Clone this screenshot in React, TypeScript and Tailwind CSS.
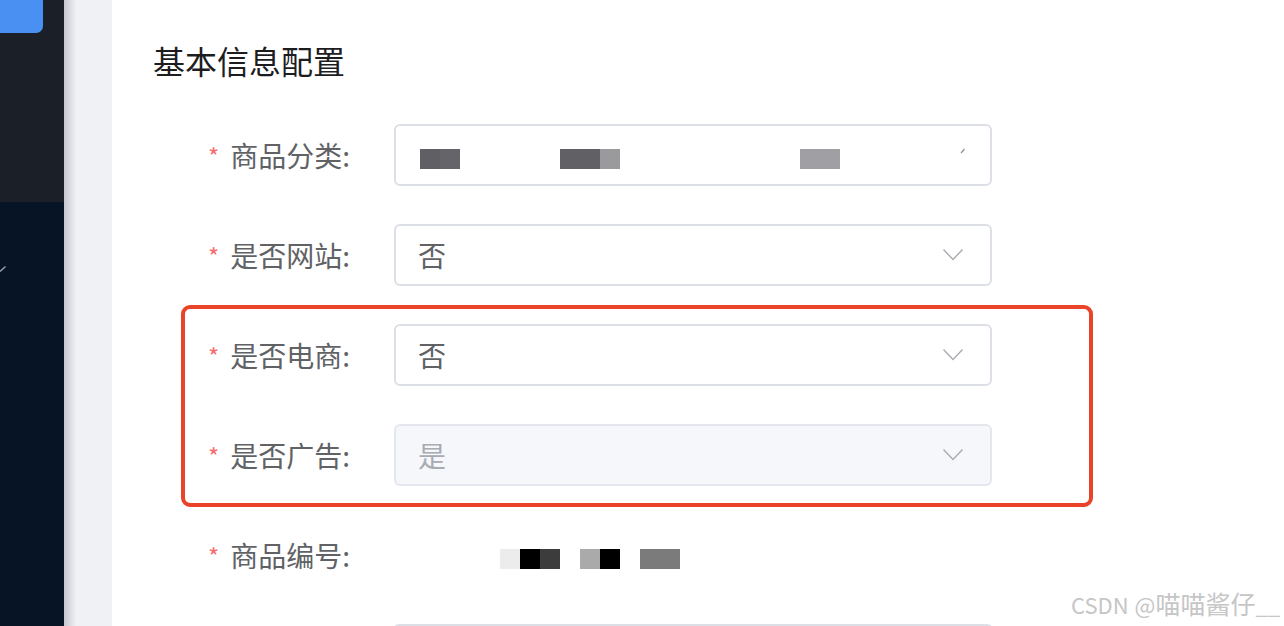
import React from 'react'

const font = { fontFamily: '"Noto Sans CJK SC", "Noto Sans", sans-serif' }

function Chevron() {
  return (
    <svg width="22" height="14" viewBox="0 0 22 14" fill="none" className="shrink-0">
      <path d="M1.5 1.5 L11 11.5 L20.5 1.5" stroke="#a8abb2" strokeWidth="1.4" />
    </svg>
  )
}

function Label({ text }: { text: string }) {
  return (
    <div className="w-[241px] shrink-0 flex justify-end items-center pr-[44px] text-[28px] leading-none text-[#606266]">
      <span className="text-[#f56c6c] text-[24px] mr-[11px] mt-[2px]">*</span>
      <span>{text}</span>
    </div>
  )
}

function SelectBox({ value, disabled }: { value: string; disabled?: boolean }) {
  return (
    <div
      className={
        disabled
          ? 'w-[598px] h-[62px] rounded-[6px] border-2 border-[#e4e7ed] bg-[#f5f7fa] flex items-center justify-between pl-[22px] pr-[26px]'
          : 'w-[598px] h-[62px] rounded-[6px] border-2 border-[#dcdfe6] bg-white flex items-center justify-between pl-[22px] pr-[26px]'
      }
    >
      <span className={disabled ? 'text-[28px] text-[#a8abb2]' : 'text-[28px] text-[#606266]'}>{value}</span>
      <Chevron />
    </div>
  )
}

export default function App() {
  return (
    <div className="h-[626px] w-[1284px] overflow-hidden flex bg-white relative" style={font}>
      {/* sidebar */}
      <aside className="w-[64px] shrink-0 flex flex-col">
        <div className="h-[202px] bg-[#1b1f27]">
          <div className="w-[43px] h-[33px] bg-[#4a90f2] rounded-br-[7px]" />
        </div>
        <div className="flex-1 bg-[#071426] pt-[62px]">
          <svg width="8" height="10" viewBox="0 0 8 10">
            <path d="M0 7.5 L5.5 2.5" stroke="#9ca3af" strokeWidth="1.3" />
          </svg>
        </div>
      </aside>

      {/* gray gutter */}
      <div className="w-[48px] shrink-0 bg-[#f0f1f4] flex">
        <div className="w-[12px] bg-linear-to-r from-[#c4c7ce] to-[#f0f1f4]" />
      </div>

      {/* content */}
      <main className="flex-1 pl-[41px] pt-[36px]">
        <h1 className="text-[32px] leading-[48px] text-[#1d1d1f]">基本信息配置</h1>

        <div className="mt-[40px] flex flex-col gap-[38px]">
          <div className="flex items-center h-[62px]">
            <Label text="商品分类:" />
            <div className="w-[598px] h-[62px] rounded-[6px] border-2 border-[#dcdfe6] bg-white relative flex items-center">
              <div className="flex items-center pl-[24px] pt-[8px]">
                <div className="w-[20px] h-[20px] bg-[#5f5f64]" />
                <div className="w-[20px] h-[20px] bg-[#646469]" />
                <div className="w-[100px]" />
                <div className="w-[40px] h-[20px] bg-[#606065]" />
                <div className="w-[20px] h-[20px] bg-[#9a9a9d]" />
                <div className="w-[180px]" />
                <div className="w-[40px] h-[20px] bg-[#a0a0a4]" />
              </div>
              <svg width="6" height="6" viewBox="0 0 6 6" className="absolute right-[24px] top-[22px]">
                <path d="M1 5 L4.5 1" stroke="#8a8d94" strokeWidth="1.2" />
              </svg>
            </div>
          </div>

          <div className="flex items-center h-[62px]">
            <Label text="是否网站:" />
            <SelectBox value="否" />
          </div>

          <div className="relative flex flex-col gap-[38px]">
            <div className="absolute left-[28px] -top-[19px] w-[912px] h-[202px] border-[4px] border-[#e9432a] rounded-[9px] pointer-events-none" />
            <div className="flex items-center h-[62px]">
              <Label text="是否电商:" />
              <SelectBox value="否" />
            </div>
            <div className="flex items-center h-[62px]">
              <Label text="是否广告:" />
              <SelectBox value="是" disabled />
            </div>
          </div>

          <div className="flex items-center h-[62px]">
            <Label text="商品编号:" />
            <div className="flex items-center pl-[106px] pt-[8px]">
              <div className="w-[20px] h-[20px] bg-[#ececec]" />
              <div className="w-[20px] h-[20px] bg-black" />
              <div className="w-[20px] h-[20px] bg-[#3c3c3c]" />
              <div className="w-[20px]" />
              <div className="w-[20px] h-[20px] bg-[#aaaaaa]" />
              <div className="w-[20px] h-[20px] bg-black" />
              <div className="w-[20px]" />
              <div className="w-[40px] h-[20px] bg-[#7b7b7b]" />
            </div>
          </div>

          <div className="flex items-center h-[62px]">
            <div className="w-[240px] shrink-0" />
            <div className="w-[600px] h-[62px] rounded-[6px] border-2 border-[#dcdfe6] bg-white" />
          </div>
        </div>
      </main>

      <div className="absolute right-[4px] bottom-[10px] flex items-baseline leading-none text-[#c6c6c6]">
        <span className="text-[22px]">CSDN</span>
        <span className="text-[22px] ml-[6px]">@</span>
        <span className="text-[25px]">喵喵酱仔</span>
        <span className="text-[22px]">__</span>
      </div>
    </div>
  )
}
